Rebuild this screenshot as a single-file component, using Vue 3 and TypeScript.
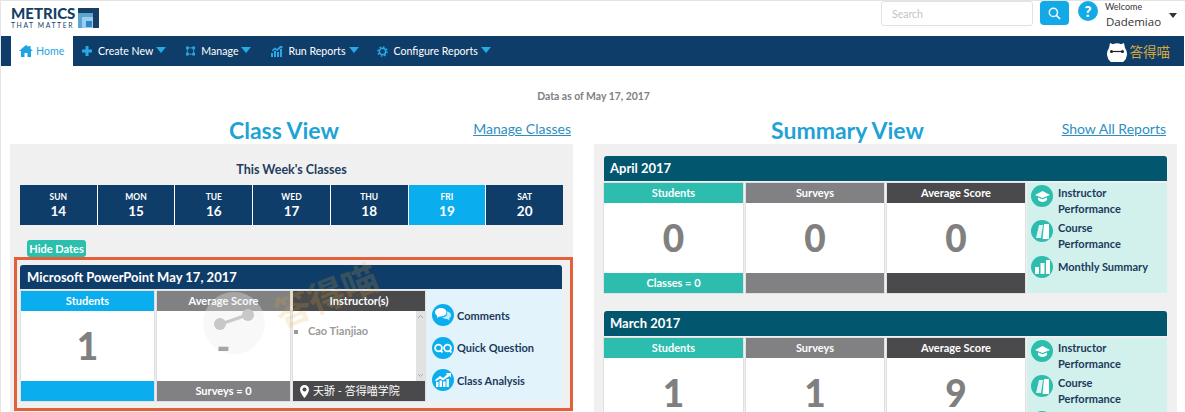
<template>
  <div class="page">
    <header class="topbar">
      <div class="logo">
        <svg class="logo-mark" width="21" height="20" viewBox="0 0 21 20">
          <rect width="21" height="20" fill="#173f66" />
          <rect x="0" y="5" width="15" height="15" fill="#5aa5d6" />
          <rect x="4" y="9" width="11" height="11" fill="#9dcdec" />
          <rect x="8" y="13" width="6" height="6" fill="#2f86c4" />
        </svg>
        <div class="logo-text">
          <span class="logo-big">METRICS</span>
          <span class="logo-small">THAT MATTER</span>
        </div>
      </div>
      <div class="top-right">
        <input class="search" type="text" placeholder="Search" />
        <button class="search-btn">
          <svg width="13" height="13" viewBox="0 0 14 14" fill="none" stroke="#fff" stroke-width="1.6">
            <circle cx="5.8" cy="5.8" r="4.4" />
            <path d="M9 9l4 4" />
          </svg>
        </button>
        <span class="help">?</span>
        <div class="user">
          <span class="welcome">Welcome</span>
          <span class="username">Dademiao</span>
        </div>
        <span class="user-caret"></span>
      </div>
    </header>

    <nav class="nav">
      <a class="nav-home">
        <svg width="14" height="12" viewBox="0 0 14 12" fill="#1ba5e0">
          <path d="M7 0L0 6h2v6h3.5V8h3v4H12V6h2l-2.5-2.2V1h-2v1.1z" />
        </svg>
        Home
      </a>
      <a class="nav-item nav-create">
        <svg width="10" height="10" viewBox="0 0 10 10" fill="#28a9e6">
          <path d="M3.5 0h3v3.500H10v3H6.500V10h-3V6.500H0v-3h3.500z" />
        </svg>
        Create New<i class="caret"></i>
      </a>
      <a class="nav-item nav-manage">
        <svg width="9" height="10" viewBox="0 0 10 10" fill="none" stroke="#28a9e6">
          <path d="M2 1.500h6M2 8.500h6M1.500 2v6M8.500 2v6" />
          <path d="M0 0h3v3H0zM7 0h3v3H7zM0 7h3v3H0zM7 7h3v3H7z" fill="#28a9e6" stroke="none" />
        </svg>
        Manage<i class="caret"></i>
      </a>
      <a class="nav-item nav-run">
        <svg width="12" height="11" viewBox="0 0 12 11" fill="#28a9e6">
          <path d="M0 7h2v4H0zM3 5h2v6H3zM6 6h2v5H6zM9 3h2v8H9zM1 4l3-2.500 2 1.500 3-3h2.500v2.500L10 2 6 5 4 3.500 1.500 5.500z" />
        </svg>
        Run Reports<i class="caret"></i>
      </a>
      <a class="nav-item nav-config">
        <svg width="11" height="11" viewBox="0 0 12 12" fill="none" stroke="#28a9e6">
          <circle cx="6" cy="6" r="3.500" stroke-width="1.600" />
          <circle cx="6" cy="6" r="5" stroke-width="1.600" stroke-dasharray="1.800 2.120" />
        </svg>
        Configure Reports<i class="caret"></i>
      </a>
      <div class="brand">
        <svg width="22" height="21" viewBox="0 0 22 21">
          <path d="M4 2l3 1.200a10 10 0 0 1 8 0L18 2l1 5a10 10 0 1 1-16 0z" fill="#fff" />
          <path d="M5 10.500h12" stroke="#222" stroke-width="1.200" />
          <circle cx="5.500" cy="10.500" r="1.500" fill="#222" />
          <circle cx="16.500" cy="10.500" r="1.500" fill="#222" />
        </svg>
        <span>答得喵</span>
      </div>
    </nav>

    <p class="data-as-of">Data as of May 17, 2017</p>

    <main class="columns">
      <section class="col col-left">
        <div class="col-head">
          <h1>Class View</h1>
          <a>Manage Classes</a>
        </div>
        <div class="panel">
          <h2 class="week-title">This Week's Classes</h2>
          <div class="week">
            <div v-for="d in days" :key="d.name" class="day" :class="{ today: d.today }">
              <span class="day-name">{{ d.name }}</span>
              <span class="day-num">{{ d.num }}</span>
            </div>
          </div>
          <div class="hide-row"><button class="hide-btn">Hide Dates</button></div>
          <div class="highlight">
            <div class="class-card">
              <div class="card-title">Microsoft PowerPoint May 17, 2017</div>
              <div class="class-body">
                <div class="stat">
                  <div class="stat-head blue">Students</div>
                  <div class="stat-num">1</div>
                  <div class="stat-foot blue"></div>
                </div>
                <div class="stat">
                  <div class="stat-head grey">Average Score</div>
                  <div class="stat-num stat-dash">-</div>
                  <div class="stat-foot grey">Surveys = 0</div>
                </div>
                <div class="stat">
                  <div class="stat-head dark">Instructor(s)</div>
                  <div class="instructors">
                    <ul><li>Cao Tianjiao</li></ul>
                    <div class="scrollbar">
                      <svg width="7" height="5" viewBox="0 0 7 5" fill="none" stroke="#aaa"><path d="M1 4l2.500-2.500L6 4" /></svg>
                      <svg width="7" height="5" viewBox="0 0 7 5" fill="none" stroke="#aaa"><path d="M1 1l2.500 2.500L6 1" /></svg>
                    </div>
                  </div>
                  <div class="stat-foot dark place">
                    <svg width="9" height="13" viewBox="0 0 9 13">
                      <path d="M4.500 0a4.500 4.500 0 0 1 4.500 4.500C9 8 4.500 13 4.500 13S0 8 0 4.500A4.500 4.500 0 0 1 4.500 0z" fill="#fff" />
                      <circle cx="4.500" cy="4.500" r="2" fill="#4a4a4c" />
                    </svg>
                    <span>天骄 - 答得喵学院</span>
                  </div>
                </div>
                <div class="class-side">
                  <a class="side-link">
                    <span class="round blue-round">
                      <svg width="16" height="14" viewBox="0 0 16 14" fill="#fff">
                        <path d="M6 0c3 0 5.500 1.800 5.500 4.200S9 8.400 6 8.400H4.500L1.800 10l.5-2.300C.9 7 0 5.700 0 4.200 0 1.800 3 0 6 0z" />
                        <path d="M12.300 3.500c2 .4 3.700 1.800 3.700 3.700 0 1.300-.7 2.300-1.800 3l.4 2.300-2.400-1.500c-2.300.2-4-.5-5-1.700 3 .2 6-1.900 4.600-5.800z" opacity=".75" />
                      </svg>
                    </span>
                    Comments
                  </a>
                  <a class="side-link">
                    <span class="round blue-round">
                      <svg width="18" height="10" viewBox="0 0 18 10" fill="none" stroke="#fff" stroke-width="1.800">
                        <circle cx="4.500" cy="5" r="3.400" />
                        <circle cx="13.500" cy="5" r="3.400" />
                        <path d="M6.500 7.500l2 2M15.500 7.500l2 2" />
                      </svg>
                    </span>
                    Quick Question
                  </a>
                  <a class="side-link">
                    <span class="round blue-round">
                      <svg width="16" height="14" viewBox="0 0 16 14" fill="#fff">
                        <path d="M1 9h2.500v5H1zM4.500 7.500H7V14H4.500zM8 8.500h2.500V14H8zM11.500 6H14v8h-2.500z" />
                        <path d="M0 7l5-4 3 2 4-3.500L11 0h5v4.500L14.500 3 8 7.500 5 5.500 1 8.500z" />
                      </svg>
                    </span>
                    Class Analysis
                  </a>
                </div>
              </div>
            </div>
            <div class="watermark">
              <div class="wm-circle">
                <svg width="46" height="26" viewBox="0 0 46 26">
                  <path d="M10 17L36 8" stroke="#c8c8c8" stroke-width="3" />
                  <circle cx="9" cy="17" r="6" fill="#c8c8c8" />
                  <circle cx="37" cy="8" r="6" fill="#c8c8c8" />
                </svg>
              </div>
              <span class="wm-text">答得喵</span>
            </div>
          </div>
        </div>
      </section>

      <section class="col col-right">
        <div class="col-head">
          <h1>Summary View</h1>
          <a>Show All Reports</a>
        </div>
        <div class="panel summary-panel">
          <div v-for="m in months" :key="m.title" class="month-card">
            <div class="month-title">{{ m.title }}</div>
            <div class="month-body">
              <div class="stat">
                <div class="stat-head teal">Students</div>
                <div class="stat-num">{{ m.students }}</div>
                <div class="stat-foot teal">Classes = {{ m.classes }}</div>
              </div>
              <div class="stat">
                <div class="stat-head grey">Surveys</div>
                <div class="stat-num">{{ m.surveys }}</div>
                <div class="stat-foot grey"></div>
              </div>
              <div class="stat">
                <div class="stat-head dark">Average Score</div>
                <div class="stat-num">{{ m.score }}</div>
                <div class="stat-foot dark"></div>
              </div>
              <div class="month-side">
                <a class="side-link two-line">
                  <span class="round teal-round">
                    <svg width="15" height="11" viewBox="0 0 15 11" fill="#fff">
                      <path d="M7.500 0L15 4 7.500 7 0 4z" />
                      <path d="M3 6.500l4.500 1.800L12 6.500V9c-2.500 2.600-6.500 2.600-9 0z" />
                    </svg>
                  </span>
                  <span>Instructor<br />Performance</span>
                </a>
                <a class="side-link two-line">
                  <span class="round teal-round">
                    <svg width="13" height="15" viewBox="0 0 13 15" fill="#fff">
                      <path d="M3 1h4L5 14H0z" opacity=".85" />
                      <path d="M8 0h5v15H6.500z" />
                    </svg>
                  </span>
                  <span>Course<br />Performance</span>
                </a>
                <a class="side-link two-line single">
                  <span class="round teal-round">
                    <svg width="15" height="14" viewBox="0 0 15 14" fill="#fff">
                      <path d="M0 7h4v7H0zM5.500 3h4v11h-4zM11 0h4v14h-4z" />
                    </svg>
                  </span>
                  <span>Monthly Summary</span>
                </a>
              </div>
            </div>
          </div>
        </div>
      </section>
    </main>
  </div>
</template>

<script setup lang="ts">
interface Day {
  name: string
  num: number
  today?: boolean
}

interface Month {
  title: string
  students: number
  classes: number
  surveys: number
  score: number
}

const days: Day[] = [
  { name: 'SUN', num: 14 },
  { name: 'MON', num: 15 },
  { name: 'TUE', num: 16 },
  { name: 'WED', num: 17 },
  { name: 'THU', num: 18 },
  { name: 'FRI', num: 19, today: true },
  { name: 'SAT', num: 20 }
]

const months: Month[] = [
  { title: 'April 2017', students: 0, classes: 0, surveys: 0, score: 0 },
  { title: 'March 2017', students: 1, classes: 1, surveys: 1, score: 9 }
]
</script>

<style>
html,
body {
  margin: 0;
  height: 412px;
  overflow: hidden;
  background: #fff;
}
</style>

<style scoped>
.page {
  width: 1185px;
  height: 412px;
  overflow: hidden;
  box-sizing: border-box;
  border-top: 1px solid #e4e4e4;
  border-left: 1px solid #e4e4e4;
  font-family: Lato, "Noto Sans CJK SC", sans-serif;
  color: #333;
}

.topbar {
  height: 35px;
  display: flex;
  justify-content: space-between;
  padding: 0 0 0 10px;
}

.logo {
  position: relative;
  width: 88px;
  padding-top: 5px;
  box-sizing: border-box;
}

.logo-text {
  position: relative;
  display: flex;
  flex-direction: column;
  color: #173f66;
}

.logo-big {
  font-size: 15px;
  font-weight: 900;
  line-height: 15px;
}

.logo-small {
  font-size: 6.800px;
  line-height: 8px;
  letter-spacing: 1.600px;
  white-space: nowrap;
}

.logo-mark {
  position: absolute;
  left: 67px;
  top: 7px;
}

.top-right {
  display: flex;
  align-items: flex-start;
  width: 304px;
}

.search {
  width: 152px;
  height: 25px;
  box-sizing: border-box;
  border: 1px solid #e2e2e2;
  border-radius: 3px;
  padding: 0 10px;
  font: 10.500px Lato, sans-serif;
  outline: none;
}

.search::placeholder {
  color: #c4c4c4;
}

.search-btn {
  width: 29px;
  height: 24px;
  margin-left: 7px;
  border: none;
  border-radius: 4px;
  background: #12a9e6;
  display: flex;
  align-items: center;
  justify-content: center;
  padding: 0;
}

.help {
  width: 20px;
  height: 20px;
  margin-left: 9px;
  border-radius: 50%;
  background: #12a9e6;
  color: #fff;
  font-size: 15px;
  font-weight: 900;
  line-height: 20px;
  text-align: center;
}

.user {
  display: flex;
  flex-direction: column;
  margin-left: 7px;
  white-space: nowrap;
}

.welcome {
  font-size: 9px;
  line-height: 12px;
}

.username {
  font-family: "Open Sans", sans-serif;
  font-size: 11.500px;
  line-height: 17px;
  margin-left: 1px;
}

.user-caret {
  margin: 12px 0 0 8px;
  border-left: 4px solid transparent;
  border-right: 4px solid transparent;
  border-top: 5px solid #333;
}

.nav {
  height: 30px;
  background: #0f3d69;
  display: flex;
  align-items: stretch;
  padding-left: 10px;
  font-size: 10.600px;
  color: #fff;
  margin-right: 1px;
}

.nav-home {
  width: 62px;
  background: #fff;
  color: #1ba5e0;
  display: flex;
  align-items: center;
  gap: 3px;
  padding-left: 8px;
  box-sizing: border-box;
}

.nav-item {
  display: flex;
  align-items: center;
  white-space: nowrap;
}

.nav-item svg {
  margin-right: 6px;
}

.nav-create {
  margin-left: 9px;
}

.nav-manage {
  margin-left: 20px;
}

.nav-run {
  margin-left: 20px;
}

.nav-run svg {
  margin-right: 5px;
}

.nav-config {
  margin-left: 18px;
}

.caret {
  margin: -2px 0 0 3px;
  border-left: 5px solid transparent;
  border-right: 5px solid transparent;
  border-top: 6px solid #28a9e6;
}

.brand {
  margin-left: auto;
  margin-right: 14px;
  display: flex;
  align-items: center;
  gap: 2px;
  color: #d9a83c;
  font-size: 13.500px;
}

.data-as-of {
  margin: 0 0 0 1px;
  height: 60px;
  padding-top: 23px;
  box-sizing: border-box;
  text-align: center;
  font-size: 10.400px;
  font-weight: 700;
  line-height: 14px;
  color: #808080;
}

.columns {
  display: flex;
  gap: 21px;
  padding-left: 9px;
}

.col-left {
  width: 563px;
}

.col-right {
  width: 583px;
}

.col-head {
  height: 18px;
  display: flex;
  justify-content: space-between;
  align-items: flex-start;
  position: relative;
  top: -9px;
}

.col-head h1 {
  margin: 0;
  font-size: 23px;
  font-weight: 700;
  line-height: 26px;
  color: #1fa3d5;
}

.col-left .col-head {
  padding: 0 2px 0 219px;
}

.col-right .col-head {
  padding: 0 11px 0 177px;
}

.col-head a {
  margin-top: 4px;
  font-size: 14px;
  line-height: 16px;
  color: #2d8fbe;
  text-decoration: underline;
}

.panel {
  height: 268px;
  background: #f0f0f0;
  box-sizing: border-box;
}

.week-title {
  margin: 0;
  padding-top: 18px;
  height: 41px;
  box-sizing: border-box;
  font-size: 12.500px;
  font-weight: 700;
  line-height: 15px;
  text-align: center;
  color: #1f3c5e;
}

.week {
  display: grid;
  grid-template-columns: repeat(7, 1fr);
  gap: 1px;
  margin: 0 10px;
  height: 40px;
  background: #fff;
}

.day {
  background: #0f3d69;
  color: #fff;
  display: flex;
  flex-direction: column;
  align-items: center;
  font-weight: 700;
  padding-top: 6px;
  box-sizing: border-box;
}

.day.today {
  background: #0aaeef;
}

.day-name {
  font-size: 8.500px;
  line-height: 12px;
}

.day-num {
  font-size: 13.500px;
  line-height: 17px;
}

.hide-row {
  height: 32px;
  padding: 15px 0 0 17px;
  box-sizing: border-box;
}

.hide-btn {
  display: block;
  width: 59px;
  height: 17px;
  padding: 0;
  border: none;
  border-radius: 3px;
  background: #2bbfad;
  color: #fff;
  font: 700 11px/17px Lato, sans-serif;
}

.highlight {
  position: relative;
  margin-left: 4px;
  width: 559px;
  height: 154px;
  box-sizing: border-box;
  border: 3px solid #e2603a;
  padding: 5px 0 0 3px;
}

.class-card {
  width: 542px;
}

.card-title {
  height: 24px;
  padding-left: 7px;
  border-radius: 3px 3px 0 0;
  background: #0f3d69;
  color: #fff;
  font-size: 13px;
  font-weight: 700;
  line-height: 24px;
}

.class-body {
  display: grid;
  grid-template-columns: 133px 133px 132px 1fr;
  gap: 3px;
  padding: 2px 0 0 1px;
  background: #e8eef3;
}

.stat {
  background: #fff;
  display: flex;
  flex-direction: column;
  height: 110px;
  box-shadow: 0 0 0 1px #e0e0e0;
}

.stat-head,
.stat-foot {
  height: 20px;
  flex: none;
  color: #fff;
  font-size: 11px;
  font-weight: 700;
  line-height: 20px;
  text-align: center;
}

.blue {
  background: #0aaeef;
}

.teal {
  background: #2cbdae;
}

.grey {
  background: #818184;
}

.dark {
  background: #4a4a4c;
}

.stat-num {
  flex: 1;
  display: flex;
  align-items: center;
  justify-content: center;
  padding-bottom: 1px;
  box-sizing: border-box;
  font-size: 37px;
  font-weight: 900;
  color: #808080;
}

.stat-num.stat-dash {
  padding: 0 0 1px;
}

.instructors {
  flex: 1;
  display: flex;
  justify-content: space-between;
  min-height: 0;
}

.instructors ul {
  margin: 0;
  padding: 13px 0 0 15px;
  font-size: 11px;
  font-weight: 700;
  line-height: 14px;
  color: #9a9a9a;
  list-style: square;
}

.scrollbar {
  width: 9px;
  background: #e2e2e2;
  display: flex;
  flex-direction: column;
  justify-content: space-between;
  align-items: center;
  padding: 3px 0;
  box-sizing: border-box;
}

.place {
  display: flex;
  align-items: center;
  gap: 4px;
  padding-left: 7px;
  font-weight: 400;
  text-align: left;
}

.class-side {
  background: #e2f3fb;
  margin: -2px 0 0 -1px;
  height: 112px;
  display: flex;
  flex-direction: column;
  gap: 10.500px;
  padding: 15px 0 0 5px;
  box-sizing: border-box;
}

.side-link {
  display: flex;
  align-items: center;
  gap: 3px;
  font-size: 11px;
  font-weight: 700;
  color: #1b3a5c;
  white-space: nowrap;
}

.round {
  width: 22px;
  height: 22px;
  flex: none;
  border-radius: 50%;
  display: flex;
  align-items: center;
  justify-content: center;
}

.blue-round {
  background: #0aaeef;
}

.teal-round {
  background: #2cbdae;
}

.watermark {
  position: absolute;
  left: 183px;
  top: 0;
  width: 220px;
  height: 100px;
  pointer-events: none;
}

.wm-circle {
  position: absolute;
  left: 3px;
  top: 32px;
  width: 62px;
  height: 62px;
  border-radius: 50%;
  background: rgba(235, 235, 235, 0.35);
  display: flex;
  align-items: center;
  justify-content: center;
  padding-bottom: 6px;
  box-sizing: border-box;
}

.wm-text {
  position: absolute;
  left: 72px;
  top: 17px;
  font-size: 36px;
  line-height: 36px;
  font-weight: 700;
  color: rgba(230, 170, 50, 0.2);
  white-space: nowrap;
  transform: rotate(-22deg);
}

.summary-panel {
  padding: 12px 10px 0;
  display: flex;
  flex-direction: column;
  gap: 18px;
}

.month-card {
  flex: none;
}

.month-title {
  height: 25px;
  padding-left: 6px;
  border-radius: 3px 3px 0 0;
  background: #02566e;
  color: #fff;
  font-size: 13px;
  font-weight: 700;
  line-height: 25px;
}

.month-body {
  display: grid;
  grid-template-columns: 139px 138px 138px 1fr;
  gap: 3px;
  padding-top: 2px;
}

.month-side {
  background: #d2f0ec;
  height: 110px;
  margin-left: -1px;
  padding: 2px 0 0 4px;
  box-sizing: border-box;
  display: flex;
  flex-direction: column;
  gap: 3px;
}

.two-line {
  align-items: flex-start;
  gap: 5px;
  line-height: 16px;
  height: 32px;
}

.two-line.single {
  align-items: center;
  height: 26px;
  margin-top: -1px;
}
</style>
